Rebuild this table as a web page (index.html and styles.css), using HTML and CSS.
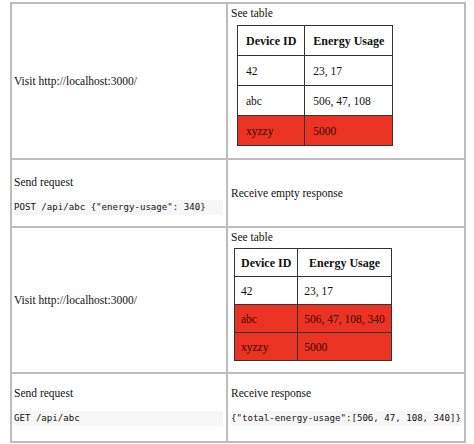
FILE: index.html
```html
<!DOCTYPE html>
<html lang="en">
<head>
    <meta charset="UTF-8">
    <meta name="viewport" content="width=device-width, initial-scale=1.0">
    <title>Energy usage steps</title>
    <link rel="stylesheet" href="styles.css">
</head>
<body>

    <table class="steps">
        <tr>
            <td class="action">Visit http://localhost:3000/</td>
            <td class="result">
                <p class="note">See table</p>
                <table class="devices first">
                    <tr><th>Device ID</th><th>Energy Usage</th></tr>
                    <tr><td>42</td><td>23, 17</td></tr>
                    <tr><td>abc</td><td>506, 47, 108</td></tr>
                    <tr class="changed"><td>xyzzy</td><td>5000</td></tr>
                </table>
            </td>
        </tr>
        <tr>
            <td class="action">
                <p class="label">Send request</p>
                <pre class="code">POST /api/abc {"energy-usage": 340}</pre>
            </td>
            <td class="result">Receive empty response</td>
        </tr>
        <tr>
            <td class="action">Visit http://localhost:3000/</td>
            <td class="result">
                <p class="note">See table</p>
                <table class="devices second">
                    <tr><th>Device ID</th><th>Energy Usage</th></tr>
                    <tr><td>42</td><td>23, 17</td></tr>
                    <tr class="changed"><td>abc</td><td>506, 47, 108, 340</td></tr>
                    <tr class="changed"><td>xyzzy</td><td>5000</td></tr>
                </table>
            </td>
        </tr>
        <tr class="step-short">
            <td class="action">
                <p class="label">Send request</p>
                <pre class="code">GET /api/abc</pre>
            </td>
            <td class="result">
                <p class="label">Receive response</p>
                <pre class="code">{"total-energy-usage":[506, 47, 108, 340]}</pre>
            </td>
        </tr>
    </table>

</body>
</html>
```

FILE: styles.css
```css
body {
    margin: 0;
    padding: 2px 8px 0 10px;
    font-family: "Liberation Serif", "Times New Roman", serif;
    font-size: 11.5px;
    color: #111;
    background: #fff;
}
.steps {
    width: 456px;
    border-collapse: collapse;
}
.steps > tbody > tr > td {
    border: 2px solid #bdbdbd;
    padding: 2px 3px;
    vertical-align: middle;
}
.steps .action {
    width: 209px;
    padding-left: 2px;
}
.note {
    margin: 0;
    line-height: 14px;
}
.label {
    margin: 13px 0 11px;
    line-height: 14px;
}
.step-short .label {
    margin: 10px 0 11px;
}
.code {
    margin: 0 0 9px;
    padding: 2px 0;
    background: #f6f6f6;
    font-family: "DejaVu Sans Mono", "Liberation Mono", monospace;
    font-size: 9.1px;
    line-height: 11px;
    color: #111;
}
.step-short .code {
    margin-bottom: 13px;
}
.devices {
    border-collapse: collapse;
}
.devices.first {
    margin: 5px 0 10px 6px;
}
.devices.second {
    margin: 4px 0 9px 3px;
}
.devices th,
.devices td {
    border: 1px solid #333;
    padding: 8px 8px 7px;
    line-height: 14px;
    text-align: left;
}
.devices.second th,
.devices.second td {
    padding: 7px 6px 6px;
}
.devices th {
    text-align: center;
    font-size: 12px;
    font-weight: bold;
}
.devices .changed td {
    background: #ea3323;
    color: #3a0905;
}
```
